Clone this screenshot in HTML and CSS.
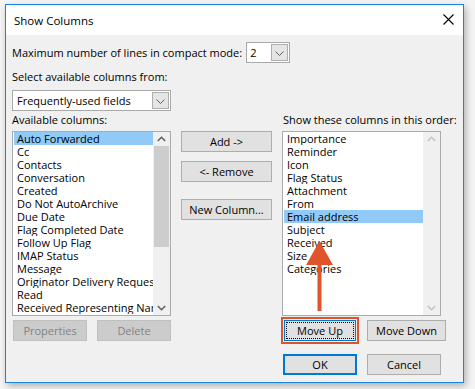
FILE: index.html
```html
<!DOCTYPE html>
<html>
<head>
<meta charset="utf-8">
<link rel="stylesheet" href="styles.css">
</head>
<body>
<div class="dialog">
  <div class="titlebar">
    <span class="title">Show Columns</span>
    <svg class="close" width="11" height="11" viewBox="0 0 11 11"><path d="M0.5 0.5L10.5 10.5M10.5 0.5L0.5 10.5" stroke="#000" stroke-width="1.1" fill="none"/></svg>
  </div>
  <div class="body">
    <div class="row1">
      <span class="text">Maximum number of lines in compact mode:</span>
      <div class="combo small">
        <span class="val">2</span>
        <span class="ddbtn"><svg width="9" height="5" viewBox="0 0 9 5"><path d="M0.5 0.5L4.5 4.5L8.5 0.5" stroke="#606060" fill="none"/></svg></span>
      </div>
    </div>
    <div class="text sel">Select available columns from:</div>
    <div class="combo wide">
      <span class="val">Frequently-used fields</span>
      <span class="ddbtn"><svg width="9" height="5" viewBox="0 0 9 5"><path d="M0.5 0.5L4.5 4.5L8.5 0.5" stroke="#606060" fill="none"/></svg></span>
    </div>
    <div class="main">
      <div class="text lbl">Available columns:</div>
      <div></div>
      <div class="text lbl lbl-right">Show these columns in this order:</div>

      <div class="list">
        <div class="items">
          <div class="item on">Auto Forwarded</div>
          <div class="item">Cc</div>
          <div class="item">Contacts</div>
          <div class="item">Conversation</div>
          <div class="item">Created</div>
          <div class="item">Do Not AutoArchive</div>
          <div class="item">Due Date</div>
          <div class="item">Flag Completed Date</div>
          <div class="item">Follow Up Flag</div>
          <div class="item">IMAP Status</div>
          <div class="item">Message</div>
          <div class="item">Originator Delivery Requested</div>
          <div class="item">Read</div>
          <div class="item">Received Representing Name</div>
        </div>
        <div class="scroll">
          <span class="arrow"><svg width="9" height="6" viewBox="0 0 9 6"><path d="M0.8 5L4.5 1.3L8.2 5" stroke="#606060" stroke-width="1.6" fill="none"/></svg></span>
          <span class="thumb"></span>
          <span class="track"></span>
          <span class="arrow"><svg width="9" height="6" viewBox="0 0 9 6"><path d="M0.8 1L4.5 4.7L8.2 1" stroke="#606060" stroke-width="1.6" fill="none"/></svg></span>
        </div>
      </div>

      <div class="mid">
        <button class="btn">Add -&gt;</button>
        <button class="btn remove">&lt;- Remove</button>
        <button class="btn newcol">New Column...</button>
      </div>

      <div class="list list-right">
        <div class="items">
          <div class="item">Importance</div>
          <div class="item">Reminder</div>
          <div class="item">Icon</div>
          <div class="item">Flag Status</div>
          <div class="item">Attachment</div>
          <div class="item">From</div>
          <div class="item on">Email address</div>
          <div class="item">Subject</div>
          <div class="item">Received</div>
          <div class="item">Size</div>
          <div class="item">Categories</div>
        </div>
        <div class="scroll disabled">
          <span class="arrow"><svg width="9" height="6" viewBox="0 0 9 6"><path d="M0.8 5L4.5 1.3L8.2 5" stroke="#c4c4c4" stroke-width="1.6" fill="none"/></svg></span>
          <span class="track"></span>
          <span class="arrow"><svg width="9" height="6" viewBox="0 0 9 6"><path d="M0.8 1L4.5 4.7L8.2 1" stroke="#c4c4c4" stroke-width="1.6" fill="none"/></svg></span>
        </div>
      </div>

      <div class="btnrow left-btns">
        <button class="btn dis props">Properties</button>
        <button class="btn dis del">Delete</button>
      </div>
      <div></div>
      <div class="btnrow right-btns">
        <button class="btn focus moveup">Move Up</button>
        <button class="btn movedown">Move Down</button>
      </div>

      <div></div>
      <div></div>
      <div class="btnrow ok-row">
        <button class="btn default ok">OK</button>
        <button class="btn cancel">Cancel</button>
      </div>
    </div>
    <svg class="redarrow" width="40" height="76" viewBox="0 0 40 76">
      <polygon points="19.5,1 6,25 33,25" fill="#e0542b"/>
      <rect x="17.5" y="24" width="4" height="47" fill="#e0542b"/>
    </svg>
  </div>
</div>
</body>
</html>
```

FILE: styles.css
```css
* { box-sizing: border-box; }
html, body { margin: 0; }
body {
  background: #f4f4f4;
  padding: 4px 0 0 5px;
  font-family: "Open Sans", "Noto Sans", sans-serif;
  font-size: 11px;
  color: #000;
  width: 475px;
  height: 389px;
  overflow: hidden;
}
.dialog {
  width: 459px;
  height: 379px;
  border: 1px solid #1883d7;
  background: #f0f0f0;
  box-shadow: 2px 3px 7px rgba(0,0,0,0.28);
  display: flex;
  flex-direction: column;
}
.titlebar {
  height: 30px;
  background: #fff;
  display: flex;
  align-items: center;
  justify-content: space-between;
  padding: 0 9px 1px 8px;
}
.title { font-size: 11.5px; line-height: 14px; margin-top: 2px; }
.close { display: block; }
.body {
  position: relative;
  flex: 1;
  padding: 7px 0 0 6px;
}
.text { line-height: 14px; white-space: nowrap; }
.row1 {
  display: flex;
  align-items: center;
  height: 21px;
  gap: 4px;
}
.combo {
  height: 21px;
  background: #fff;
  border: 1px solid #a9a9a9;
  display: flex;
  align-items: center;
  justify-content: space-between;
  padding: 1px;
}
.combo .val { line-height: 14px; padding-left: 3px; }
.combo.small { width: 44px; }
.combo.small .val { padding-left: 2px; }
.combo.wide { width: 159px; margin-top: 6px; }
.ddbtn {
  width: 17px;
  height: 17px;
  border: 1px solid #adadad;
  background: #e5e5e5;
  display: flex;
  align-items: center;
  justify-content: center;
}
.ddbtn svg { display: block; margin-top: 1px; }
.sel { margin-top: 7px; }
.main {
  margin-top: 2px;
  display: grid;
  grid-template-columns: 159px 91px 164px;
  column-gap: 10px;
  grid-template-rows: 14px 185px 21px 21px;
  row-gap: 4px;
}
.lbl-right { padding-left: 1px; }
.list {
  border: 1px solid #ababab;
  background: #fff;
  display: flex;
  padding: 0 0 0 1px;
  overflow: hidden;
}
.list-right { width: 159px; }
.items { flex: 1; min-width: 0; overflow: hidden; }
.item {
  height: 13px;
  line-height: 13px;
  padding-left: 3px;
  white-space: nowrap;
  overflow: hidden;
}
.item.on { background: #91c9f7; }
.scroll {
  width: 17px;
  display: flex;
  flex-direction: column;
  background: #f0f0f0;
}
.scroll .arrow {
  height: 14px;
  display: flex;
  align-items: center;
  justify-content: center;
}
.scroll .thumb { height: 101px; background: #cdcdcd; margin: 0 1px; }
.scroll .track { flex: 1; }
.mid { display: flex; flex-direction: column; }
.btn {
  font: inherit;
  color: #000;
  height: 21px;
  background: #e1e1e1;
  border: 1px solid #adadad;
  padding: 0;
  margin: 0;
  line-height: 14px;
  position: relative;
}
.mid .btn { width: 91px; }
.mid .remove { margin-top: 9px; }
.mid .newcol { margin-top: 17px; }
.btnrow { display: flex; }
.btn.dis {
  background: #cccccc;
  border-color: #bfbfbf;
  color: #838383;
}
.props { width: 74px; margin-left: 1px; }
.del { width: 74px; margin-left: 10px; }
.moveup { width: 72px; margin-left: 2px; border-color: #0078d7; }
.moveup::after {
  content: "";
  position: absolute;
  inset: 1px;
  border: 1px dotted #000;
}
.moveup { outline: 2px solid #e0542b; outline-offset: 1px; }
.movedown { width: 79px; margin-left: 11px; }
.ok-row { margin-top: 9px; }
.ok { width: 74px; margin-left: 1px; border: 2px solid #0078d7; }
.cancel { width: 74px; margin-left: 10px; }
.redarrow { position: absolute; left: 294px; top: 205px; }
```
